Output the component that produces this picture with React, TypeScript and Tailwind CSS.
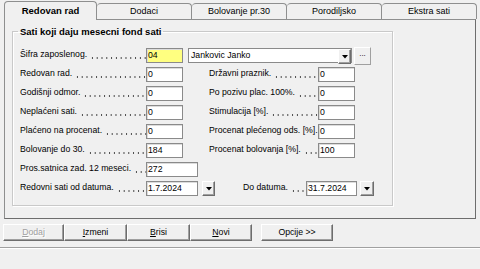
import React from "react";

function Label({ text, w }: { text: string; w: string }) {
  return (
    <div className={`${w} shrink-0 flex items-end h-[15px] pb-[3px] overflow-hidden whitespace-nowrap`}>
      <span className="leading-[11px]">{text}</span>
      <span className="flex-1 min-w-[2px] ml-[3px] h-[2px] mb-[1px] bg-[radial-gradient(circle,#444_0.6px,transparent_0.9px)] bg-[length:4.8px_2px] bg-repeat-x" />
    </div>
  );
}

function Field({ value, w, yellow }: { value: string; w: string; yellow?: boolean }) {
  return (
    <div
      className={`${w} h-[15px] shrink-0 border border-[#8a8a8a] shadow-[inset_1px_1px_0_#dcdcdc] pl-[1px] leading-[13px] ${
        yellow ? "bg-[#ffff80]" : "bg-white"
      }`}
    >
      {value}
    </div>
  );
}

function DropBtn({ w }: { w: string }) {
  return (
    <div
      className={`${w} h-[15px] shrink-0 flex items-center justify-center bg-[#f0f0f0] border border-t-white border-l-white border-r-[#6d6d6d] border-b-[#6d6d6d] shadow-[inset_-1px_-1px_0_#a0a0a0]`}
    >
      <svg width="6" height="4" viewBox="0 0 6 4">
        <polygon points="0,0 6,0 3,3.5" fill="#000" />
      </svg>
    </div>
  );
}

const tabs = ["Dodaci", "Bolovanje pr.30", "Porodiljsko", "Ekstra sati"];

const rows: [string, string, string, string][] = [
  ["Redovan rad.", "0", "Državni praznik.", "0"],
  ["Godišnji odmor.", "0", "Po pozivu plac. 100%.", "0"],
  ["Neplaćeni sati.", "0", "Stimulacija [%].", "0"],
  ["Plaćeno na procenat.", "0", "Procenat plećenog ods. [%].", "0"],
  ["Bolovanje do 30.", "184", "Procenat bolovanja [%].", "100"],
];

const btnCls =
  "h-[17px] shrink-0 flex items-center justify-center border border-t-white border-l-white border-r-[#6d6d6d] border-b-[#6d6d6d] shadow-[inset_-1px_-1px_0_#a0a0a0]";

export default function App() {
  return (
    <div className="w-[480px] h-[269px] overflow-hidden bg-[#f0f0f0] text-[8.7px] text-black font-['Liberation_Sans',Arial,sans-serif]">
      {/* tabs */}
      <div className="flex items-end h-[19px] pl-[4px]">
        <div className="relative z-10 -mb-px w-[93px] h-[19px] shrink-0 flex items-center justify-center rounded-t-[4px] border border-b-0 border-[#8e8f8f] bg-[#f0f0f0] font-bold text-[9.5px]">
          Redovan rad
        </div>
        {tabs.map((t) => (
          <div
            key={t}
            className="w-[95px] h-[16px] shrink-0 flex items-center justify-center rounded-t-[4px] border border-b-0 border-l-0 border-[#8e8f8f] bg-[#f0f0f0] pt-[1px] text-[9px]"
          >
            {t}
          </div>
        ))}
      </div>

      {/* panel */}
      <div className="ml-[4px] w-[472px] h-[200px] border border-[#8e8f8f] border-r-[#6d6d6d] border-b-[#6d6d6d] bg-[#f0f0f0]">
        <fieldset className="ml-[7px] mt-[6px] w-[381px] h-[180px] border border-[#c9c9c9] shadow-[1px_1px_0_#fff,inset_1px_1px_0_#fff] px-[7px]">
          <legend className="-ml-[2px] px-[2px] font-bold leading-[11px] text-[9.5px]">
            Sati koji daju mesecni fond sati
          </legend>

          <div className="mt-[9px] flex flex-col">
            {/* row 1 */}
            <div className="h-[19px] flex items-center">
              <Label text="Šifra zaposlenog." w="w-[126px]" />
              <Field value="04" w="w-[37px]" yellow />
              <div className="ml-[5px] w-[164px] h-[15px] shrink-0 flex border border-[#8a8a8a] bg-white">
                <div className="flex-1 pl-[2px] leading-[13px]">Jankovic Janko</div>
                <DropBtn w="w-[13px]" />
              </div>
              <div className="ml-[2px] w-[17px] h-[18px] shrink-0 flex items-center justify-center border border-t-white border-l-white border-r-[#a0a0a0] border-b-[#a0a0a0] text-[8px] leading-none pb-[3px]">
                ...
              </div>
            </div>

            {rows.map(([l1, v1, l2, v2]) => (
              <div key={l1} className="h-[19px] flex items-center">
                <Label text={l1} w="w-[126px]" />
                <Field value={v1} w="w-[37px]" />
                <div className="ml-[26px]">
                  <Label text={l2} w="w-[109px]" />
                </div>
                <Field value={v2} w="w-[37px]" />
              </div>
            ))}

            <div className="h-[19px] flex items-center">
              <Label text="Pros.satnica zad. 12 meseci." w="w-[126px]" />
              <Field value="272" w="w-[52px]" />
            </div>

            <div className="h-[19px] flex items-center">
              <Label text="Redovni sati od datuma." w="w-[126px]" />
              <Field value="1.7.2024" w="w-[52px]" />
              <div className="ml-[4px]">
                <DropBtn w="w-[13px]" />
              </div>
              <div className="ml-[28px]">
                <Label text="Do datuma." w="w-[63px]" />
              </div>
              <Field value="31.7.2024" w="w-[51px]" />
              <div className="ml-[3px]">
                <DropBtn w="w-[14px]" />
              </div>
            </div>
          </div>
        </fieldset>
      </div>

      {/* buttons */}
      <div className="mt-[5px] flex pl-[3px]">
        <div className={`${btnCls} w-[61px] text-[#a0a0a0] [text-shadow:1px_1px_0_#fff]`}>
          <span className="underline">D</span>odaj
        </div>
        <div className={`${btnCls} w-[63px]`}>
          <span className="underline">I</span>zmeni
        </div>
        <div className={`${btnCls} w-[63px]`}>
          <span className="underline">B</span>risi
        </div>
        <div className={`${btnCls} w-[62px]`}>
          <span className="underline">N</span>ovi
        </div>
        <div className={`${btnCls} ml-[9px] w-[72px]`}>Opcije &gt;&gt;</div>
      </div>

      {/* status line */}
      <div className="mt-[6px] border-t border-[#a0a0a0] shadow-[0_1px_0_#fff]" />
    </div>
  );
}
